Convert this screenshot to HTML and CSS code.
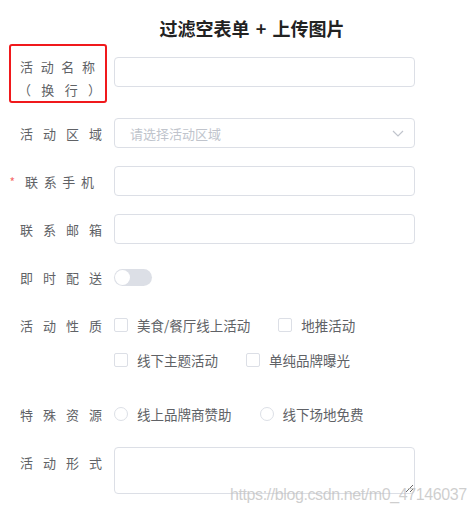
FILE: index.html
```html
<!DOCTYPE html>
<html lang="zh-CN">
<head>
    <meta charset="UTF-8">
    <meta name="viewport" content="width=device-width, initial-scale=1.0">
    <title>过滤空表单 + 上传图片</title>
    <link rel="stylesheet" href="styles.css">
</head>
<body>
    <h2 class="title">过滤空表单 + 上传图片</h2>

    <form class="form">
        <!-- 活动名称 (label qui passe à la ligne) -->
        <div class="row row-first">
            <div class="label-boxed">
                <span class="line line-one"><i>活</i><i>动</i><i>名</i><i>称</i></span>
                <span class="line line-two"><i>（</i><i>换</i><i>行</i><i>）</i></span>
            </div>
            <input type="text" class="input">
        </div>

        <div class="row">
            <label class="label"><span class="label-text"><i>活</i><i>动</i><i>区</i><i>域</i></span></label>
            <div class="select">
                <span class="placeholder">请选择活动区域</span>
                <svg class="arrow" width="12" height="7" viewBox="0 0 12 7">
                    <polyline points="1,1 6,6 11,1" fill="none" stroke="#c0c4cc" stroke-width="1.2"/>
                </svg>
            </div>
        </div>

        <div class="row">
            <label class="label">
                <span class="star">*</span>
                <span class="label-text short"><i>联</i><i>系</i><i>手</i><i>机</i></span>
            </label>
            <input type="text" class="input">
        </div>

        <div class="row">
            <label class="label"><span class="label-text"><i>联</i><i>系</i><i>邮</i><i>箱</i></span></label>
            <input type="text" class="input">
        </div>

        <div class="row">
            <label class="label"><span class="label-text"><i>即</i><i>时</i><i>配</i><i>送</i></span></label>
            <div class="control">
                <span class="switch"><span class="knob"></span></span>
            </div>
        </div>

        <div class="row row-wide">
            <label class="label"><span class="label-text"><i>活</i><i>动</i><i>性</i><i>质</i></span></label>
            <div class="options">
                <span class="option"><span class="checkbox"></span>美食/餐厅线上活动</span>
                <span class="option"><span class="checkbox"></span>地推活动</span>
                <span class="option"><span class="checkbox"></span>线下主题活动</span>
                <span class="option"><span class="checkbox"></span>单纯品牌曝光</span>
            </div>
        </div>

        <div class="row">
            <label class="label"><span class="label-text"><i>特</i><i>殊</i><i>资</i><i>源</i></span></label>
            <div class="options">
                <span class="option"><span class="radio"></span>线上品牌商赞助</span>
                <span class="option"><span class="radio"></span>线下场地免费</span>
            </div>
        </div>

        <div class="row">
            <label class="label"><span class="label-text"><i>活</i><i>动</i><i>形</i><i>式</i></span></label>
            <textarea class="textarea"></textarea>
        </div>
    </form>

    <div class="watermark">https://blog.csdn.net/m0_47146037</div>
</body>
</html>
```

FILE: styles.css
```css
body {
    margin: 0;
    background: #fff;
    font-family: "Noto Sans CJK SC", "Liberation Sans", sans-serif;
    color: #606266;
    font-size: 13px;
}
i {
    font-style: normal;
}
.title {
    margin: 16px 0 0 30px;
    font-size: 18px;
    line-height: 24px;
    font-weight: bold;
    color: #222;
    text-align: center;
    word-spacing: 2px;
}
.form {
    margin-top: 4px;
}
.row {
    display: flex;
    align-items: flex-start;
    margin-bottom: 18px;
}
.row-first {
    margin-bottom: 15px;
}
.row-wide {
    margin-bottom: 24px;
}
.label {
    width: 114px;
    height: 30px;
    box-sizing: border-box;
    padding-right: 12px;
    display: flex;
    justify-content: flex-end;
    align-items: center;
    flex-shrink: 0;
}
.label-text {
    width: 82px;
    display: flex;
    justify-content: space-between;
}
.label-text.short {
    width: 69px;
    margin-right: 8px;
}
.star {
    color: #f56c6c;
    margin-right: 10px;
    font-size: 12px;
}
/* cadre rouge autour du libellé sur deux lignes */
.label-boxed {
    width: 98px;
    height: 59px;
    box-sizing: border-box;
    margin: 0 7px 0 9px;
    padding: 9px 4px 0 0;
    border: 2px solid #f0191c;
    border-radius: 3px;
    display: flex;
    flex-direction: column;
    align-items: flex-end;
    flex-shrink: 0;
}
.line {
    display: flex;
    justify-content: space-between;
    line-height: 23px;
}
.line-one {
    width: 75px;
    margin-right: 6px;
}
.line-two {
    width: 83px;
}
.row-first .input {
    margin-top: 13px;
}
.input, .select, .textarea {
    width: 301px;
    height: 30px;
    box-sizing: border-box;
    border: 1px solid #dcdfe6;
    border-radius: 4px;
    background: #fff;
    font-family: inherit;
    font-size: 13px;
    color: #606266;
    padding: 0 15px;
    outline: none;
}
.select {
    display: flex;
    align-items: center;
    justify-content: space-between;
    padding-right: 10px;
}
.placeholder {
    color: #c0c4cc;
}
.textarea {
    height: 47px;
    padding: 5px 15px;
    resize: vertical;
}
.control {
    height: 30px;
    display: flex;
    align-items: center;
}
.switch {
    width: 38px;
    height: 17px;
    border-radius: 9px;
    background: #dcdfe6;
    position: relative;
}
.knob {
    position: absolute;
    top: 1px;
    left: 1px;
    width: 15px;
    height: 15px;
    border-radius: 50%;
    background: #fff;
}
.options {
    width: 320px;
    display: flex;
    flex-wrap: wrap;
    row-gap: 5px;
    font-size: 13.5px;
}
.option {
    height: 30px;
    display: flex;
    align-items: center;
    margin-right: 28px;
    white-space: nowrap;
}
.checkbox, .radio {
    width: 14px;
    height: 14px;
    box-sizing: border-box;
    border: 1px solid #dcdfe6;
    background: #fff;
    margin-right: 9px;
}
.checkbox {
    border-radius: 2px;
}
.radio {
    border-radius: 50%;
}
.watermark {
    position: absolute;
    left: 230px;
    top: 486px;
    font-family: "Liberation Sans", sans-serif;
    font-size: 16px;
    letter-spacing: -0.4px;
    line-height: 18px;
    color: rgba(190, 190, 190, 0.75);
}
```
